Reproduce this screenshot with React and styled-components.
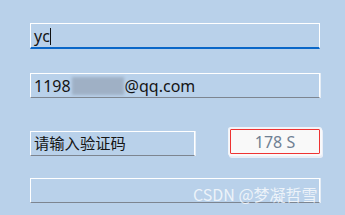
import React from "react";
import styled, { createGlobalStyle } from "styled-components";

const Global = createGlobalStyle`
  html, body { margin: 0; padding: 0; background: #b9d1ea; }
  body { width: 345px; height: 215px; overflow: hidden; font-family: "Noto Sans", "Noto Sans CJK SC", sans-serif; }
`;

const Page = styled.div`
  position: relative;
  width: 345px;
  height: 215px;
  box-sizing: border-box;
  padding: 23px 0 0 30px;
  display: flex;
  flex-direction: column;
`;

const Field = styled.div`
  box-sizing: border-box;
  width: ${(p) => p.$w || 290}px;
  height: ${(p) => p.$h || 25}px;
  margin-top: ${(p) => p.$mt || 0}px;
  border-top: 1px solid #ffffff;
  border-left: 1px solid #ffffff;
  border-right: 1px solid #ffffff;
  border-bottom: ${(p) => (p.$focus ? "2px solid #0a67c8" : "1px solid #7d8590")};
  box-shadow: ${(p) => (p.$focus ? "none" : "1px 0 0 #e4ecf5")};
  display: flex;
  align-items: center;
  padding-left: 3px;
  padding-top: 1px;
  font-size: 16px;
  color: #151515;
  line-height: 1;
  white-space: nowrap;
`;

const Caret = styled.span`
  display: inline-block;
  width: 1px;
  height: 17px;
  background: #111;
`;

const Blur = styled.span`
  display: inline-block;
  width: 52px;
  height: 18px;
  background: #9fb0c5;
  filter: blur(1.5px);
  margin: 0 1px 0 1px;
`;

const Row = styled.div`
  display: flex;
  align-items: flex-start;
  margin-top: ${(p) => p.$mt || 0}px;
  width: 293px;
`;

const CodeField = styled(Field)`
  font-family: "Noto Sans CJK SC", "Noto Sans", sans-serif;
  margin-top: 2px;
  padding-left: 3px;
  padding-top: 0;
  padding-bottom: 2px;
  font-size: 15.3px;
`;

const Timer = styled.div`
  box-sizing: border-box;
  margin-left: 35px;
  width: 90px;
  height: 25px;
  border: 1px solid #ee3333;
  background: #f9f9f9;
  box-shadow: 0 0 0 2px rgba(250, 250, 252, 0.85), 1px 2px 0 2px rgba(245, 245, 250, 0.8);
  border-radius: 1px;
  display: flex;
  align-items: center;
  justify-content: center;
  font-size: 16px;
  color: #6f8093;
  padding-top: 1px;
`;

const Mark = styled.div`
  position: absolute;
  left: 193px;
  top: 184px;
  font-family: "Noto Sans CJK SC", "Noto Sans", sans-serif;
  font-size: 16px;
  color: rgba(255, 255, 255, 0.75);
  white-space: nowrap;
  line-height: 20px;
`;

export default function App() {
  return (
    <>
      <Global />
      <Page>
        <Field $focus $h={26}>
          yc<Caret />
        </Field>
        <Field $mt={24}>
          1198<Blur />@qq.com
        </Field>
        <Row $mt={31}>
          <CodeField $w={165}>请输入验证码</CodeField>
          <Timer>178 S</Timer>
        </Row>
        <Field $mt={22} />
        <Mark>CSDN @梦凝哲雪</Mark>
      </Page>
    </>
  );
}
